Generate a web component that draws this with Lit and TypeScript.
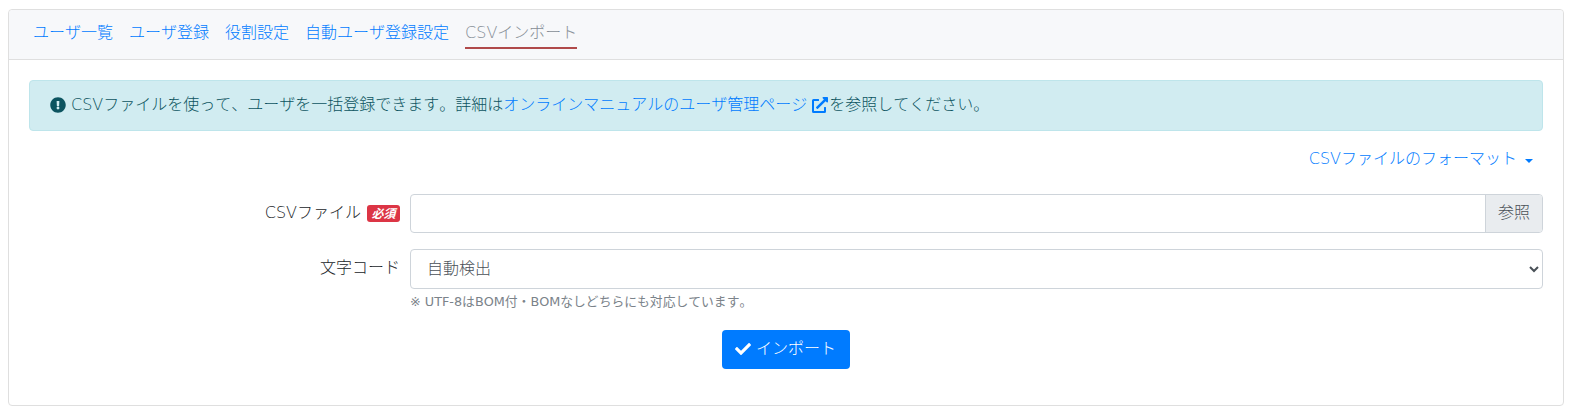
import { LitElement, html, css, svg } from "lit";
import { customElement } from "lit/decorators.js";

const check = svg`<path fill="currentColor" d="M173.898 439.404l-166.4-166.4c-9.997-9.997-9.997-26.206 0-36.204l36.203-36.204c9.997-9.998 26.207-9.998 36.204 0L192 312.69 432.095 72.596c9.997-9.997 26.207-9.997 36.204 0l36.203 36.204c9.997 9.997 9.997 26.206 0 36.204l-294.4 294.401c-9.998 9.997-26.207 9.997-36.204-.001z"/>`;
const excl = svg`<path fill="currentColor" d="M504 256c0 136.997-111.043 248-248 248S8 392.997 8 256C8 119.083 119.043 8 256 8s248 111.083 248 248zm-248 50c-25.405 0-46 20.595-46 46s20.595 46 46 46 46-20.595 46-46-20.595-46-46-46zm-43.673-165.346l7.418 136c.347 6.364 5.609 11.346 11.982 11.346h48.546c6.373 0 11.635-4.982 11.982-11.346l7.418-136c.375-6.874-5.098-12.654-11.982-12.654h-63.383c-6.884 0-12.356 5.78-11.981 12.654z"/>`;
const ext = svg`<path fill="currentColor" d="M432,320H400a16,16,0,0,0-16,16V448H64V128H208a16,16,0,0,0,16-16V80a16,16,0,0,0-16-16H48A48,48,0,0,0,0,112V464a48,48,0,0,0,48,48H400a48,48,0,0,0,48-48V336A16,16,0,0,0,432,320ZM488,0h-128c-21.37,0-32.05,25.91-17,41l35.73,35.73L135,320.37a24,24,0,0,0,0,34L157.67,377a24,24,0,0,0,34,0L435.28,133.32,471,169c15,15,41,4.5,41-17V24A24,24,0,0,0,488,0Z"/>`;

@customElement("app-root")
export class AppRoot extends LitElement {
  static styles = css`
    :host {
      display: block;
      padding: 9px 10px 13px 8px;
      font-family: "DejaVu Sans", "Noto Sans CJK JP", sans-serif;
      font-size: 16px;
      font-weight: 300;
      font-kerning: none;
      line-height: 24px;
      color: #212529;
      background: #fff;
    }
    a { color: #007bff; text-decoration: none; }
    .card {
      border: 1px solid #dfdfdf;
      border-radius: 4px;
      height: 397px;
      box-sizing: border-box;
    }
    .head {
      display: flex;
      gap: 16px;
      height: 50px;
      box-sizing: border-box;
      padding: 11px 24px 0;
      background: #f7f8fa;
      border-bottom: 1px solid #dfdfdf;
      border-radius: 4px 4px 0 0;
    }
    .tab { height: 26px; }
    .tab.active {
      color: #868e96;
      border-bottom: 2px solid #b04a4a;
    }
    .body { padding: 20px 20px 0; }
    .alert {
      background: #d1ecf1;
      border: 1px solid #bee5eb;
      border-radius: 4px;
      color: #0c5460;
      padding: 12px 20px 13px;
      display: flex;
      align-items: center;
    }
    .alert svg.i { width: 16px; height: 16px; margin-right: 5px; }
    .alert svg.e { width: 16px; height: 16px; margin: 0 1px 0 5px; color: #007bff; }
    .fmt {
      display: flex;
      justify-content: flex-end;
      align-items: center;
      margin-top: 16px;
      padding-right: 10px;
    }
    .caret {
      width: 0; height: 0;
      margin-left: 8px;
      margin-top: 3px;
      border-left: 4px solid transparent;
      border-right: 4px solid transparent;
      border-top: 4px solid #007bff;
    }
    .row {
      display: grid;
      grid-template-columns: 371px 1fr;
      column-gap: 10px;
      align-items: start;
    }
    .row.file { margin-top: 23px; }
    .row.enc { margin-top: 16px; }
    .label {
      display: flex;
      justify-content: flex-end;
      align-items: center;
      gap: 6px;
      height: 37px;
      padding-bottom: 2px;
    }
    .badge {
      display: inline-flex;
      align-items: center;
      justify-content: center;
      width: 33px;
      height: 17px;
      margin-top: 2px;
      background: #dc3545;
      color: #fff;
      border-radius: 3px;
      font-size: 12px;
      font-weight: 700;
      font-style: italic;
      line-height: 1;
    }
    .filebox {
      display: flex;
      height: 39px;
      box-sizing: border-box;
      border: 1px solid #ced4da;
      border-radius: 4px;
      overflow: hidden;
    }
    .filebox .name { flex: 1; }
    .filebox .browse {
      width: 56px;
      background: #e9ecef;
      border-left: 1px solid #ced4da;
      color: #495057;
      text-align: center;
      line-height: 35px;
    }
    select {
      display: block;
      width: 100%;
      height: 40px;
      box-sizing: border-box;
      padding: 5px 12px 6px;
      font: inherit;
      color: #495057;
      background: #fff;
      border: 1px solid #ced4da;
      border-radius: 4px;
      outline: none;
    }
    .help {
      margin-top: 3px;
      font-size: 12.8px;
      font-weight: 400;
      line-height: 19px;
      color: #7b838a;
    }
    .actions {
      display: flex;
      justify-content: center;
      margin-top: 19px;
      padding-right: 1px;
    }
    .btn {
      display: flex;
      align-items: center;
      justify-content: center;
      gap: 5px;
      width: 128px;
      height: 39px;
      box-sizing: border-box;
      background: #007bff;
      color: #fff;
      border-radius: 4px;
      border: none;
      padding: 0 0 2px;
      font: inherit;
    }
    .btn svg { width: 16px; height: 16px; }
  `;

  render() {
    return html`
      <div class="card">
        <nav class="head">
          <a class="tab" href="#">ユーザ一覧</a>
          <a class="tab" href="#">ユーザ登録</a>
          <a class="tab" href="#">役割設定</a>
          <a class="tab" href="#">自動ユーザ登録設定</a>
          <span class="tab active">CSVインポート</span>
        </nav>
        <div class="body">
          <div class="alert">
            <svg class="i" viewBox="0 0 512 512">${excl}</svg>
            <span>CSVファイルを使って、ユーザを一括登録できます。詳細は</span><a href="#">オンラインマニュアルのユーザ管理ページ</a><svg class="e" viewBox="0 0 512 512">${ext}</svg><span>を参照してください。</span>
          </div>
          <div class="fmt"><a href="#">CSVファイルのフォーマット</a><span class="caret"></span></div>
          <div class="row file">
            <div class="label"><span>CSVファイル</span><span class="badge">必須</span></div>
            <div class="filebox"><span class="name"></span><span class="browse">参照</span></div>
          </div>
          <div class="row enc">
            <div class="label"><span>文字コード</span></div>
            <div>
              <select><option>自動検出</option></select>
              <div class="help">※ UTF-8はBOM付・BOMなしどちらにも対応しています。</div>
            </div>
          </div>
          <div class="actions">
            <button class="btn"><svg viewBox="0 0 512 512">${check}</svg><span>インポート</span></button>
          </div>
        </div>
      </div>
    `;
  }
}
